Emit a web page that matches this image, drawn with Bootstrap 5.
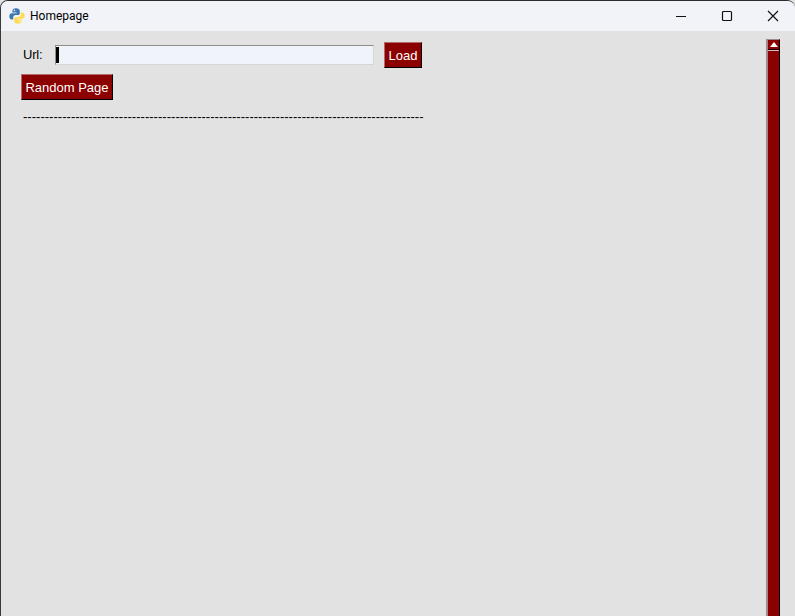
<!DOCTYPE html>
<html lang="en">
<head>
<meta charset="utf-8">
<title>Homepage</title>
<link rel="stylesheet" href="https://cdn.jsdelivr.net/npm/bootstrap@5.3.0/dist/css/bootstrap.min.css">
<style>
html,body{height:100%;margin:0;overflow:hidden;background:#e2e2e2;}
body{font-family:"Liberation Sans",Arial,sans-serif;color:#000;}
.win-shell{width:795px;height:616px;background:#e2e2e2;border-left:1px solid #3a3a3a;border-top:1px solid #2b2b2b;border-top-left-radius:8px;border-top-right-radius:8px;overflow:hidden;}
.win-title{height:30px;background:#f1f3f9;flex:none;}
.win-text{font-family:Roboto,"Liberation Sans",sans-serif;font-size:12px;color:#000;}
.win-icon{margin-left:8px;margin-right:5px;}
.win-ctrls{margin-right:-1px;}
.win-ctrl{width:46px;height:30px;}
.win-body{min-height:0;}
.tk-col{width:425px;padding:11px 0 0 20px;}
.tk-label{font-size:13px;line-height:22px;margin-left:2px;width:32px;letter-spacing:-.2px;}
.tk-entry{width:319px;height:20px;background:#f0f3f9;border:1px solid;border-color:#8e8e8e #d6d6d6 #d6d6d6 #8e8e8e;padding:1px 0 1px 0;}
.tk-caret{width:3px;height:16px;background:#000;}
.tk-btn{background:#8b0000;color:#fff;font-size:13px;line-height:15px;border:1px solid;border-color:#b56a6a #000 #000 #b56a6a;border-radius:0;}
.tk-load{margin-left:10px;height:26px;width:38px;padding:4px 0;}
.tk-random{height:26px;width:92px;margin-top:6px;padding:4px 0;}
.tk-rule{font-size:13px;line-height:15px;letter-spacing:.025px;margin:9px 0 0 2px;white-space:nowrap;}
.tk-scroll{width:14px;margin:8px 15px 0 0;background:#8b0000;border:1px solid;border-color:#a08a8a #000 #000 #a08a8a;border-left-width:2px;border-bottom:0;}
.tk-arrow{height:10px;border-bottom:1px solid #1c0000;box-shadow:0 1px 0 #d8b8b8;}
</style>
</head>
<body>
<div class="win-shell d-flex flex-column">
  <div class="win-title d-flex align-items-center">
    <svg class="win-icon" width="16" height="16" viewBox="0 0 16 16" aria-hidden="true">
      <path d="M7 0.3C4.4 0.3 3.4 1.5 3.4 3V4.5H7.6V5.2H2.8C1.2 5.2 0.3 6.6 0.3 8.3C0.3 10.1 1.2 11.5 2.8 11.5H4.2V9.4C4.2 8 5.3 7 6.6 7H9C10.1 7 10.8 6.2 10.8 5.2V3C10.8 1.5 9.4 0.3 7 0.3Z" fill="#3c78ad"/>
      <path d="M9 15.7C11.6 15.7 12.6 14.5 12.6 13V11.5H8.4V10.8H13.2C14.8 10.8 15.7 9.4 15.7 7.7C15.7 5.9 14.8 4.5 13.2 4.5H11.8V6.6C11.8 8 10.7 9 9.4 9H7C5.9 9 5.2 9.8 5.2 10.8V13C5.2 14.5 6.6 15.7 9 15.7Z" fill="#ffdb55"/>
      <circle cx="5.4" cy="2.4" r=".8" fill="#e8f0f6"/>
      <circle cx="10.6" cy="13.6" r=".8" fill="#fff6c8"/>
    </svg>
    <span class="win-text">Homepage</span>
    <div class="win-ctrls ms-auto d-flex">
      <div class="win-ctrl d-flex align-items-center justify-content-center"><svg width="12" height="12" viewBox="0 0 12 12" aria-hidden="true"><path d="M1 6.5H11" stroke="#111" stroke-width="1.2" fill="none"/></svg></div>
      <div class="win-ctrl d-flex align-items-center justify-content-center"><svg width="12" height="12" viewBox="0 0 12 12" aria-hidden="true"><rect x="1.5" y="1.5" width="9" height="9" rx="1" stroke="#111" stroke-width="1.2" fill="none"/></svg></div>
      <div class="win-ctrl d-flex align-items-center justify-content-center"><svg width="12" height="12" viewBox="0 0 12 12" aria-hidden="true"><path d="M1 1L11 11M11 1L1 11" stroke="#111" stroke-width="1.2" fill="none"/></svg></div>
    </div>
  </div>
  <div class="win-body d-flex flex-grow-1">
    <div class="tk-col">
      <div class="d-flex align-items-center">
        <span class="tk-label">Url:</span>
        <div class="tk-entry"><div class="tk-caret"></div></div>
        <button type="button" class="btn tk-btn tk-load">Load</button>
      </div>
      <button type="button" class="btn tk-btn tk-random d-block">Random Page</button>
      <div class="tk-rule">--------------------------------------------------------------------------------------------</div>
    </div>
    <div class="tk-scroll ms-auto"><div class="tk-arrow d-flex align-items-center justify-content-center"><svg width="8" height="5" viewBox="0 0 8 5" aria-hidden="true"><path d="M4 0L8 5H0Z" fill="#fff"/></svg></div></div>
  </div>
</div>
</body>
</html>
